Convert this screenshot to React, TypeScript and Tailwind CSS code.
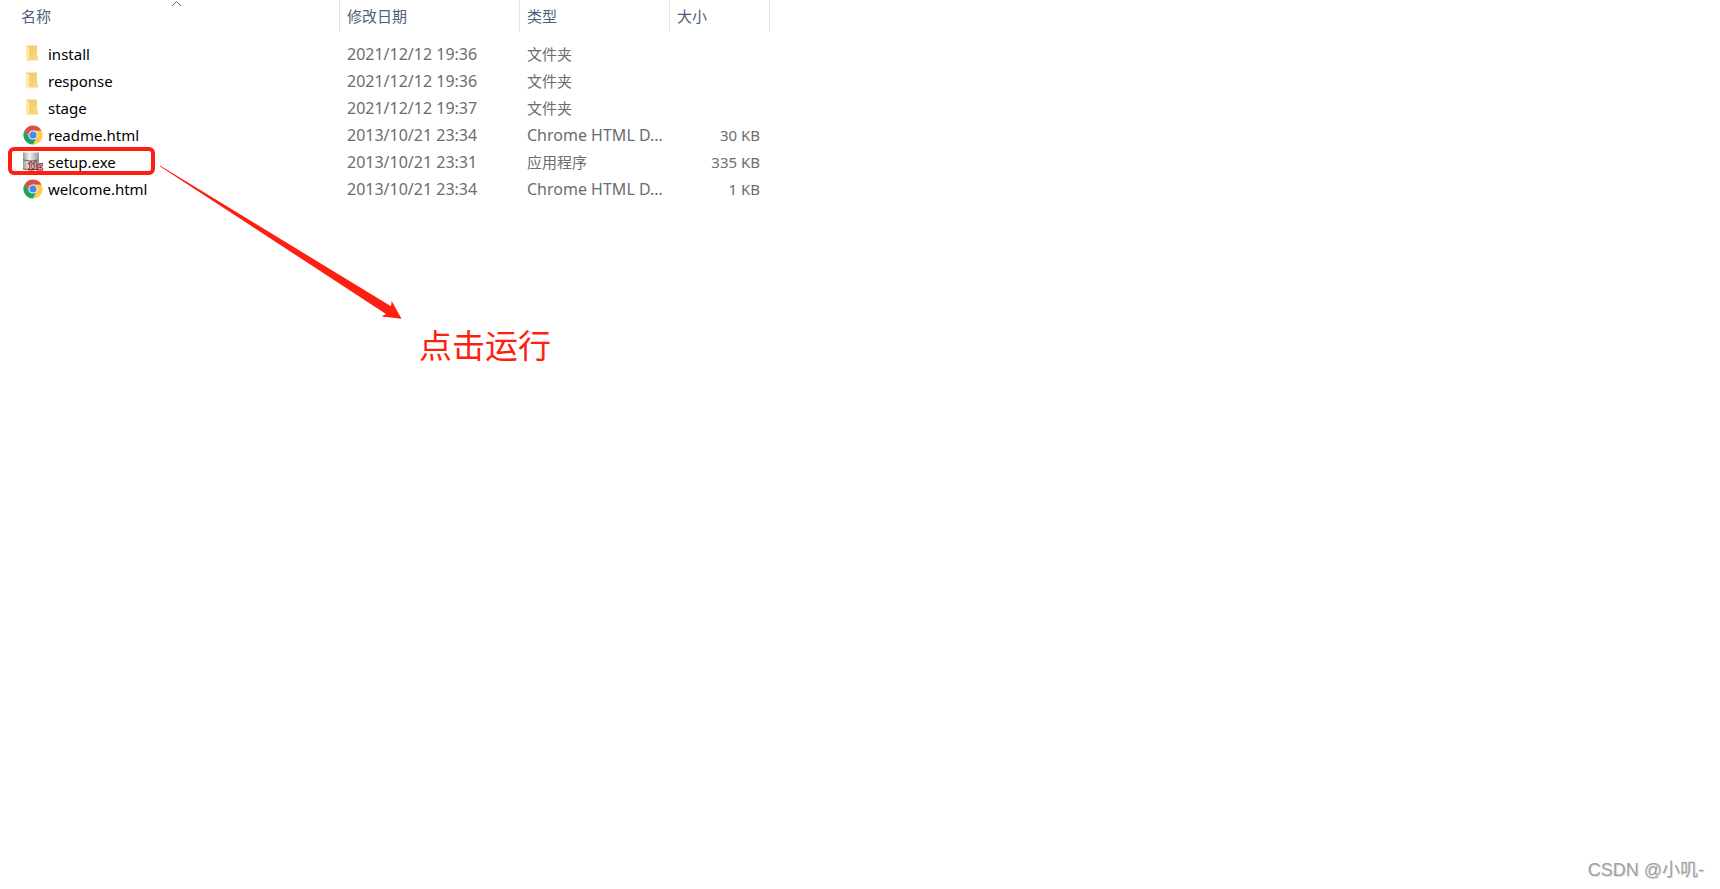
import React from "react";

type Kind = "folder" | "chrome" | "setup";

interface Entry {
  name: string;
  kind: Kind;
  modified: string;
  type: string;
  size: string;
}

const entries: Entry[] = [
  { name: "install", kind: "folder", modified: "2021/12/12 19:36", type: "文件夹", size: "" },
  { name: "response", kind: "folder", modified: "2021/12/12 19:36", type: "文件夹", size: "" },
  { name: "stage", kind: "folder", modified: "2021/12/12 19:37", type: "文件夹", size: "" },
  { name: "readme.html", kind: "chrome", modified: "2013/10/21 23:34", type: "Chrome HTML D...", size: "30 KB" },
  { name: "setup.exe", kind: "setup", modified: "2013/10/21 23:31", type: "应用程序", size: "335 KB" },
  { name: "welcome.html", kind: "chrome", modified: "2013/10/21 23:34", type: "Chrome HTML D...", size: "1 KB" },
];

function FolderIcon() {
  return (
    <svg width="20" height="20" viewBox="0 0 20 20" aria-hidden="true">
      <defs>
        <linearGradient id="folderBack" x1="0" y1="0" x2="1" y2="1">
          <stop offset="0" stopColor="#ecc763" />
          <stop offset="1" stopColor="#f8dc84" />
        </linearGradient>
      </defs>
      <path d="M3 1.500h11v10.500l1 .6V16.500H5.500z" fill="url(#folderBack)" />
      <path d="M3 1.500 6.200 3.600V18.300L3 16.500z" fill="#ffe9a6" />
    </svg>
  );
}

function ChromeIcon() {
  return (
    <svg width="20" height="20" viewBox="0 0 48 48" aria-hidden="true">
      <path d="M24 13.500H44.450A23 23 0 0 1 24 47L33.100 29.250z" fill="#fdcd46" />
      <path d="M14.900 29.250 4.080 12.500A23 23 0 0 0 24 47L33.100 29.250z" fill="#1da362" />
      <path d="M24 13.500H44.450A23 23 0 0 0 4.080 12.500L14.900 29.250z" fill="#dd4f43" />
      <circle cx="24" cy="24" r="11" fill="#f4f4f4" />
      <circle cx="24" cy="24" r="8.500" fill="#4587f3" />
    </svg>
  );
}

function SetupIcon() {
  return (
    <svg className="overflow-visible" width="20" height="20" viewBox="0 0 20 20" aria-hidden="true">
      <defs>
        <linearGradient id="drum" x1="0" x2="1" y1="0" y2="0">
          <stop offset="0" stopColor="#9a9a9a" />
          <stop offset=".4" stopColor="#f2f2f2" />
          <stop offset="1" stopColor="#959595" />
        </linearGradient>
      </defs>
      <path d="M0 .5H16V17Q8 19.500 0 17z" fill="url(#drum)" />
      <path d="M0 8Q8 10 16 8M0 17Q8 19.500 16 17" fill="none" stroke="#6b6b6b" strokeWidth="1" />
      <text
        x="5"
        y="17"
        className="font-['Liberation_Serif',serif] text-[10px] font-bold"
        fill="#f5a0a2"
        stroke="#6a1a1f"
        strokeWidth="1.400"
        paintOrder="stroke"
      >
        11g
      </text>
    </svg>
  );
}

function FileIcon({ kind }: { kind: Kind }) {
  if (kind === "folder") return <FolderIcon />;
  if (kind === "chrome") return <ChromeIcon />;
  return <SetupIcon />;
}

const headCell = "h-8 border-r border-[#e5e5e5] py-0 pl-[7px] text-left align-middle font-normal";

export default function App() {
  return (
    <main className="relative min-h-screen overflow-hidden bg-white font-['Noto_Sans','Noto_Sans_CJK_SC',sans-serif] text-[15px] leading-5 text-[#6d6d6d]">
      <table className="w-[770px] table-fixed border-separate border-spacing-0">
        <colgroup>
          <col className="w-[340px]" />
          <col className="w-[180px]" />
          <col className="w-[150px]" />
          <col className="w-[100px]" />
        </colgroup>
        <thead className="text-[#4c607a]">
          <tr>
            <th scope="col" aria-sort="ascending" className="relative h-8 border-r border-[#e5e5e5] py-0 pl-[21px] text-left align-middle font-normal">
              名称
              <svg className="absolute top-0 left-[171px]" width="11" height="7" viewBox="0 0 11 7" aria-hidden="true">
                <path d="M1 6 5.500 1.500 10 6" fill="none" stroke="#6d6d6d" />
              </svg>
            </th>
            <th scope="col" className={headCell}>修改日期</th>
            <th scope="col" className={headCell}>类型</th>
            <th scope="col" className={headCell}>大小</th>
          </tr>
        </thead>
        <tbody className="before:block before:h-2">
          {entries.map((e) => (
            <tr key={e.name}>
              <td className="h-[27px] p-0 pl-[23px]">
                <a href={"#" + e.name} className="flex items-center gap-[5px] text-black">
                  <FileIcon kind={e.kind} />
                  <span>{e.name}</span>
                </a>
              </td>
              <td className="p-0 pl-[7px] text-base leading-5">{e.modified}</td>
              <td className={e.kind === "chrome" ? "p-0 pl-[7px] text-base leading-5 whitespace-nowrap" : "p-0 pl-[7px] whitespace-nowrap"}>{e.type}</td>
              <td className="p-0 pr-[10px] text-right">{e.size}</td>
            </tr>
          ))}
        </tbody>
      </table>

      <div className="pointer-events-none absolute top-[147px] left-2 h-7 w-[147px] rounded-[6px] border-4 border-[#ff1e10]" />
      <svg className="pointer-events-none absolute top-[160px] left-[155px]" width="250" height="164" viewBox="155 160 250 164" aria-hidden="true">
        <path d="M160 165.500 391 306.300 391.700 301 401.500 318.700 381.500 316.500 386 314 159.800 166.200z" fill="#ff1e10" />
      </svg>
      <p className="absolute top-[326px] left-[419px] text-[33px] leading-10 text-[#ff1e10]">点击运行</p>

      <p className="absolute right-4 bottom-[7px] font-['Liberation_Sans','Noto_Sans_CJK_SC',sans-serif] text-lg leading-6 text-[#a0a0a0] [text-shadow:1px_1px_0_#e4e4e4]">
        CSDN @小叽-
      </p>
    </main>
  );
}
